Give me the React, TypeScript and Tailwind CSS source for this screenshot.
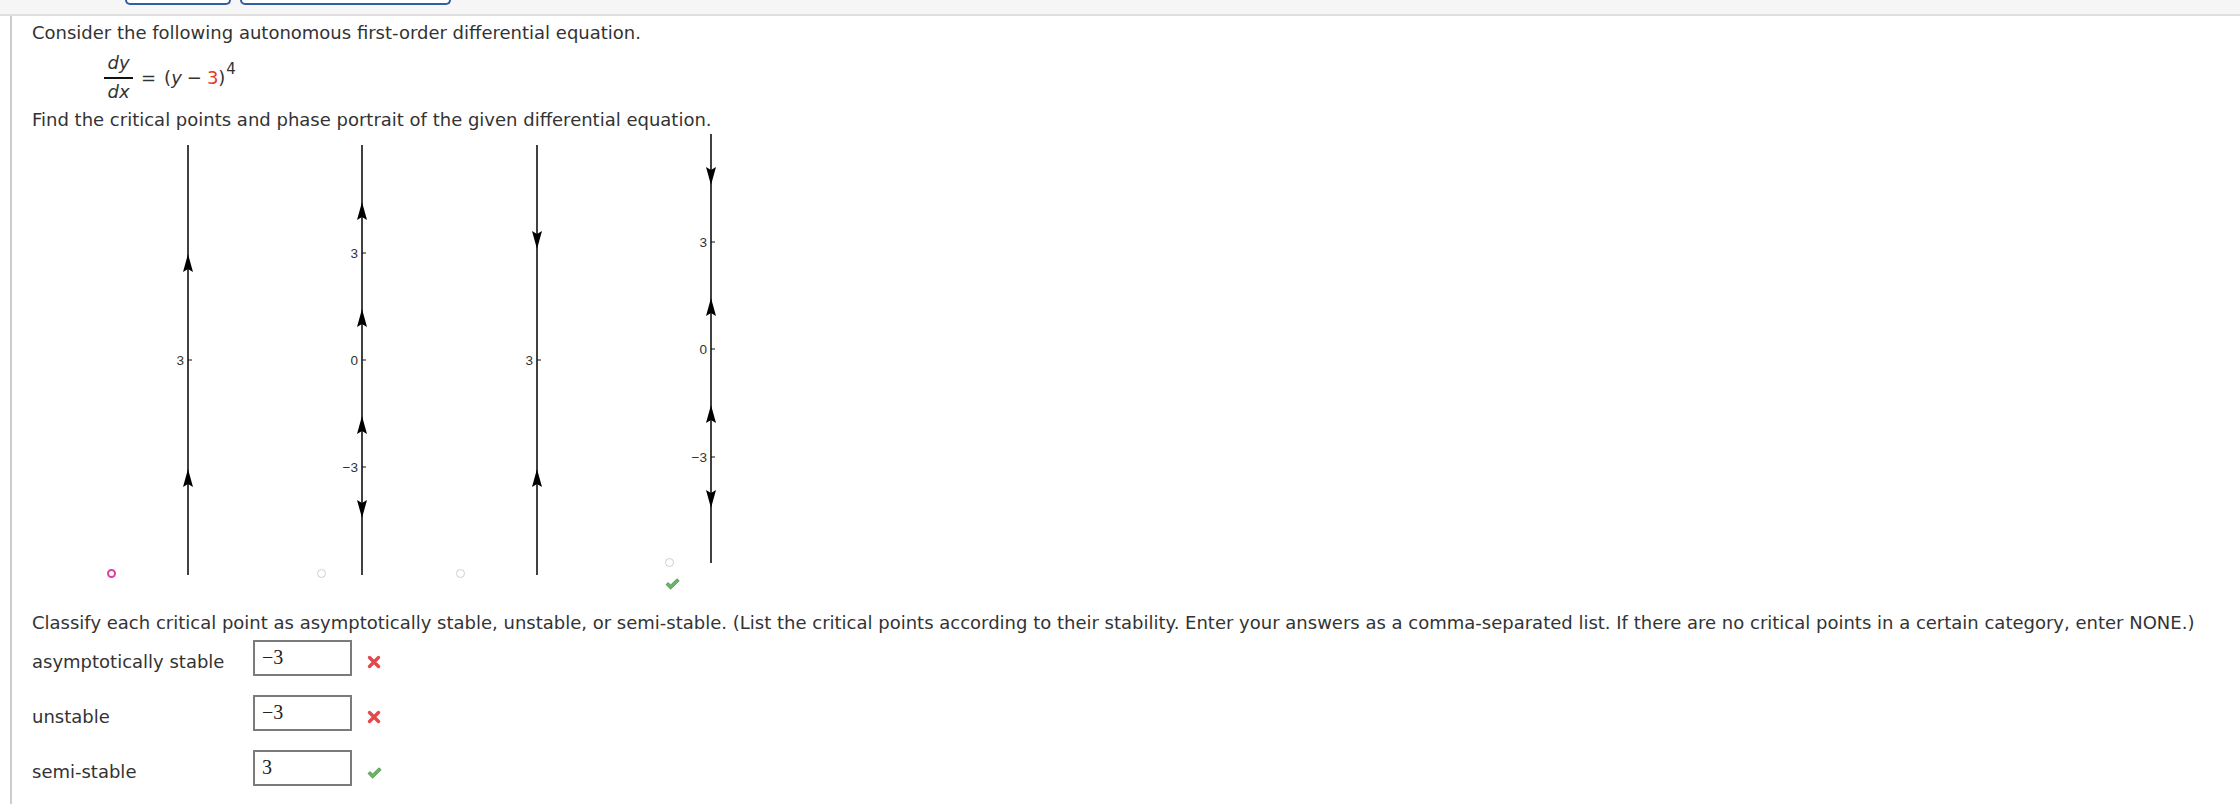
import React from "react";

type Arrow = { y: number; dir: "up" | "down" };
type Tick = { y: number; label: string };

function PhaseLine({
  width,
  x,
  top,
  bottom,
  arrows,
  ticks,
}: {
  width: number;
  x: number;
  top: number;
  bottom: number;
  arrows: Arrow[];
  ticks: Tick[];
}) {
  return (
    <svg width={width} height={445} viewBox={`0 0 ${width} 445`} className="block shrink-0">
      <line x1={x} y1={top} x2={x} y2={bottom} stroke="#111" strokeWidth={1.6} />
      {ticks.map((t, i) => (
        <g key={i}>
          <line x1={x} y1={t.y} x2={x + 4} y2={t.y} stroke="#111" strokeWidth={1} />
          <text
            x={x - 4}
            y={t.y + 4.5}
            textAnchor="end"
            fontSize={13.5}
            fill="#333"
            fontFamily="'Liberation Sans', Arial, sans-serif"
          >
            {t.label}
          </text>
        </g>
      ))}
      {arrows.map((a, i) =>
        a.dir === "up" ? (
          <path
            key={i}
            d={`M${x} ${a.y} L${x + 5} ${a.y + 18} L${x} ${a.y + 15} L${x - 5} ${a.y + 18} Z`}
            fill="#000"
          />
        ) : (
          <path
            key={i}
            d={`M${x} ${a.y} L${x + 5} ${a.y - 18} L${x} ${a.y - 15} L${x - 5} ${a.y - 18} Z`}
            fill="#000"
          />
        )
      )}
    </svg>
  );
}

function Radio({ selected }: { selected?: boolean }) {
  return selected ? (
    <div className="w-[9px] h-[9px] rounded-full border-[2.5px] border-[#d9419e] bg-white" />
  ) : (
    <div className="w-[9px] h-[9px] rounded-full border border-[#cfcfcf] bg-white" />
  );
}

function CheckMark() {
  return (
    <svg width="15" height="12" viewBox="0 0 15 12" className="block">
      <path
        d="M1 6.5 L3.2 4.6 L5.6 7 L12 0.8 L14.2 2.8 L5.6 11.2 Z"
        fill="#6ab566"
        stroke="#4b8f48"
        strokeWidth="0.8"
        strokeLinejoin="round"
      />
    </svg>
  );
}

function XMark() {
  return (
    <svg width="14" height="14" viewBox="0 0 14 14" className="block">
      <path d="M2.5 2.5 L11.5 11.5 M11.5 2.5 L2.5 11.5" stroke="#e2494b" strokeWidth="3.4" strokeLinecap="round" />
    </svg>
  );
}

function AnswerRow({
  label,
  value,
  correct,
}: {
  label: string;
  value: string;
  correct: boolean;
}) {
  return (
    <div className="flex items-center h-[36px]">
      <div className="w-[221px] text-[18px] leading-[24px] pt-[7px]">{label}</div>
      <div className="w-[99px] h-[36px] border-2 border-[#7b7b7b] bg-white flex items-center pl-[7px] pb-[2px]">
        <span className="font-['Liberation_Serif','Times_New_Roman',serif] text-[20px] text-[#222]">
          {value}
        </span>
      </div>
      <div className={correct ? "ml-[15px] pt-[9px]" : "ml-[15px] pt-[8px]"}>
        {correct ? <CheckMark /> : <XMark />}
      </div>
    </div>
  );
}

export default function App() {
  return (
    <div className="w-[2240px] h-[804px] bg-white overflow-hidden text-[#333] font-['DejaVu_Sans','Verdana',sans-serif]">
      {/* top bar */}
      <div className="h-[16px] bg-[#f6f6f6] border-b-2 border-[#dedede] flex gap-[9px] pl-[125px]">
        <div className="w-[106px] h-[5px] border-2 border-t-0 border-[#2f5f9c] rounded-b-[5px] bg-white" />
        <div className="w-[211px] h-[5px] border-2 border-t-0 border-[#2f5f9c] rounded-b-[5px] bg-white" />
      </div>

      <div className="ml-[10px] border-l-2 border-[#cccccc] h-[788px] pl-[20px] pt-[5px]">
        <div className="text-[18px] leading-[24px]">
          Consider the following autonomous first-order differential equation.
        </div>

        {/* equation */}
        <div className="mt-[8px] ml-[72px] flex items-center">
          <div className="flex flex-col items-center">
            <div className="italic text-[18px] leading-[20px] px-[2px]">dy</div>
            <div className="w-[29px] h-[2px] bg-[#111] mt-[4px]" />
            <div className="italic text-[18px] leading-[20px] px-[2px] mt-[3px]">dx</div>
          </div>
          <div className="ml-[8px] text-[18px] leading-[20px] flex items-start whitespace-pre">
            <span>=</span>
            <span className="ml-[8px]">(</span>
            <span className="italic">y</span>
            <span className="ml-[5px]">−</span>
            <span className="ml-[5px] text-[#e8392b]">3</span>
            <span>)</span>
            <span className="text-[15px] leading-[15px] -mt-[6px] ml-[1px]">4</span>
          </div>
        </div>

        <div className="mt-[6px] text-[18px] leading-[24px]">
          Find the critical points and phase portrait of the given differential equation.
        </div>

        {/* phase portraits */}
        <div className="flex items-start h-[460px]">
          <div className="ml-[75px] mt-[437px]">
            <Radio selected />
          </div>
          <div className="ml-[4px]">
            <PhaseLine
              width={180}
              x={68}
              top={13}
              bottom={443}
              arrows={[
                { y: 122, dir: "up" },
                { y: 337, dir: "up" },
              ]}
              ticks={[{ y: 228, label: "3" }]}
            />
          </div>

          <div className="ml-[17px] mt-[437px]">
            <Radio />
          </div>
          <div className="ml-[4px]">
            <PhaseLine
              width={110}
              x={32}
              top={13}
              bottom={443}
              arrows={[
                { y: 70, dir: "up" },
                { y: 177, dir: "up" },
                { y: 284, dir: "up" },
                { y: 386, dir: "down" },
              ]}
              ticks={[
                { y: 121, label: "3" },
                { y: 228, label: "0" },
                { y: 335, label: "−3" },
              ]}
            />
          </div>

          <div className="ml-[16px] mt-[437px]">
            <Radio />
          </div>
          <div className="ml-[4px]">
            <PhaseLine
              width={171}
              x={68}
              top={13}
              bottom={443}
              arrows={[
                { y: 117, dir: "down" },
                { y: 337, dir: "up" },
              ]}
              ticks={[{ y: 228, label: "3" }]}
            />
          </div>

          <div className="ml-[25px] mt-[426px] w-[14px] flex flex-col items-start">
            <Radio />
            <div className="mt-[11px]">
              <CheckMark />
            </div>
          </div>
          <div>
            <PhaseLine
              width={80}
              x={32}
              top={2}
              bottom={431}
              arrows={[
                { y: 53, dir: "down" },
                { y: 166, dir: "up" },
                { y: 273, dir: "up" },
                { y: 376, dir: "down" },
              ]}
              ticks={[
                { y: 110, label: "3" },
                { y: 217, label: "0" },
                { y: 325, label: "−3" },
              ]}
            />
          </div>
        </div>

        <div className="mt-[19px] text-[18px] leading-[24px] whitespace-nowrap">
          Classify each critical point as asymptotically stable, unstable, or semi-stable. (List the
          critical points according to their stability. Enter your answers as a comma-separated list.
          If there are no critical points in a certain category, enter NONE.)
        </div>

        <div className="mt-[5px] flex flex-col gap-[19px]">
          <AnswerRow label="asymptotically stable" value="−3" correct={false} />
          <AnswerRow label="unstable" value="−3" correct={false} />
          <AnswerRow label="semi-stable" value="3" correct={true} />
        </div>
      </div>
    </div>
  );
}
